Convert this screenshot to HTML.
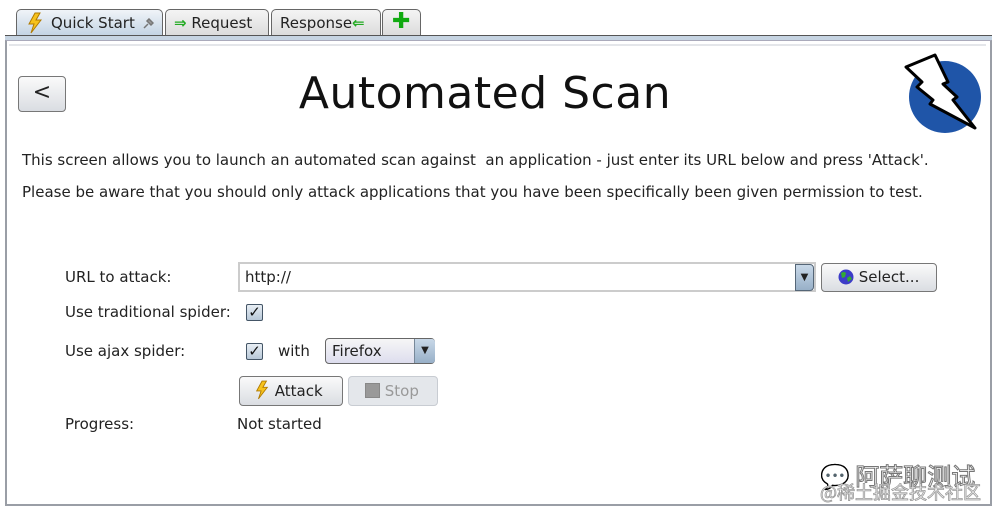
<!DOCTYPE html>
<html><head><meta charset="utf-8"><style>
body{margin:0;width:997px;height:517px;background:#fff;position:relative;overflow:hidden;font-family:"DejaVu Sans","Liberation Sans",sans-serif;font-size:15px;color:#222}
.a{position:absolute}
.tab{position:absolute;top:9px;height:26px;border:1px solid #666;border-bottom:none;border-radius:5px 5px 0 0;background:linear-gradient(#f4f4f4,#dcdcdc);font-size:15px;line-height:26px;box-sizing:border-box;padding-left:8px;white-space:nowrap}
.tab.sel{background:linear-gradient(#f0f4f8,#c4d4e4);}
.btn{position:absolute;border:1px solid #777;border-radius:4px;background:linear-gradient(#fafafa,#dadde2);box-sizing:border-box;font-size:15px}
.cb{position:absolute;width:15px;height:15px;border:1px solid #456;border-radius:2px;background:linear-gradient(#e8eef4,#b8c8d8);font-size:15px;line-height:15px;text-align:center;font-weight:bold;color:#111}
</style></head><body>
<div class="tab sel" style="left:16px;width:147px">
<svg class="a" style="left:9px;top:2px" width="18" height="22" viewBox="0 0 18 22"><path d="M9 1 L3 12 L8 12 L5 21 L15 8 L10 8 L14 1 Z" fill="#f6c21c" stroke="#b07a00" stroke-width="1"/></svg>
<span style="position:absolute;left:34px">Quick Start</span>
<svg class="a" style="left:126px;top:8px" width="11" height="11" viewBox="0 0 11 11"><path d="M1 10 L5 6 M4 3 L8 7 M6 1 L10 5 L8 7 L4 3 Z" stroke="#777" fill="#999" stroke-width="1.5"/></svg></div>
<div class="tab" style="left:165px;width:104px"><span style="color:#2a2;font-weight:bold">⇒</span> Request</div>
<div class="tab" style="left:271px;width:110px">Response<span style="color:#2a2;font-weight:bold">⇐</span></div>
<div class="tab" style="left:382px;width:39px;color:#1a1;font-weight:bold;font-size:22px;padding-left:9px;line-height:24px">✚</div>
<div class="a" style="left:5px;top:35px;width:987px;height:5px;background:#c6d4e2;border-top:1px solid #555"></div>
<div class="a" style="left:5px;top:40px;width:983px;height:463px;border:2px solid #9a9ea6;border-top:1px solid #aab;background:#fff"></div>
<div class="a" style="left:9px;top:44px;width:977px;height:2px;background:#e4e6ea"></div>
<div class="btn" style="left:18px;top:76px;width:48px;height:36px;font-size:22px;text-align:center;line-height:32px">&lt;</div>
<div class="a" style="left:0;width:970px;top:68px;text-align:center;font-size:44px;color:#111;letter-spacing:0.5px">Automated Scan</div>
<svg class="a" style="left:890px;top:40px" width="107" height="100" viewBox="0 0 107 100">
<circle cx="55" cy="57" r="36" fill="#1f55a8"/>
<path d="M16 27 L45 15 L58 42 L53 44 L67 57 L63 60 L85 88 L40 64 L43 60 L27 47 L32 42 Z" fill="#fff" stroke="#000" stroke-width="3" stroke-linejoin="round"/></svg>
<div class="a" style="left:22px;top:151px;white-space:nowrap">This screen allows you to launch an automated scan against&nbsp; an application - just enter its URL below and press 'Attack'.</div>
<div class="a" style="left:22px;top:183px;white-space:nowrap">Please be aware that you should only attack applications that you have been specifically been given permission to test.</div>
<div class="a" style="left:65px;top:268px">URL to attack:</div>
<div class="a" style="left:238px;top:262px;width:578px;height:30px;border:2px solid #ccc;box-sizing:border-box;background:#fff;padding-left:5px;line-height:26px">http://</div>
<div class="a" style="left:795px;top:264px;width:19px;height:27px;border:1px solid #567;border-radius:0 4px 4px 0;background:linear-gradient(#c8d8e8,#98b0c8);box-sizing:border-box;font-size:10px;text-align:center;line-height:25px">▼</div>
<div class="btn" style="left:821px;top:263px;width:116px;height:29px;line-height:27px;padding-left:16px">
<svg style="vertical-align:-3px" width="16" height="16" viewBox="0 0 16 16"><circle cx="8" cy="8" r="7.5" fill="#3c3cc8"/><path d="M3 4 Q6 2 8 4 L7 8 L4 9 Z M9 9 L12 7 L14 10 L10 13 Z" fill="#3a3"/></svg> Select...</div>
<div class="a" style="left:65px;top:303px">Use traditional spider:</div>
<div class="cb" style="left:246px;top:304px">✓</div>
<div class="a" style="left:65px;top:342px">Use ajax spider:</div>
<div class="cb" style="left:246px;top:343px">✓</div>
<div class="a" style="left:278px;top:342px">with</div>
<div class="a" style="left:325px;top:338px;width:110px;height:26px;border:1px solid #666;border-radius:4px;background:linear-gradient(#f6f6f6,#dde);box-sizing:border-box;padding-left:6px;line-height:24px">Firefox</div>
<div class="a" style="left:414px;top:339px;width:20px;height:24px;border-left:1px solid #789;border-radius:0 3px 3px 0;background:linear-gradient(#c8d8e8,#98b0c8);font-size:10px;text-align:center;line-height:24px">▼</div>
<div class="btn" style="left:239px;top:376px;width:104px;height:30px;line-height:28px;padding-left:14px">
<svg style="vertical-align:-4px" width="16" height="20" viewBox="0 0 18 22"><path d="M9 1 L3 12 L8 12 L5 21 L15 8 L10 8 L14 1 Z" fill="#f6c21c" stroke="#b07a00"/></svg> Attack</div>
<div class="a" style="left:348px;top:376px;width:90px;height:30px;border:1px solid #c8ccd2;border-radius:4px;background:#e4e7eb;box-sizing:border-box;line-height:28px;padding-left:16px;color:#999">
<span style="display:inline-block;width:13px;height:13px;background:#999;border:1px solid #888;vertical-align:-2px"></span> Stop</div>
<div class="a" style="left:65px;top:415px">Progress:</div>
<div class="a" style="left:237px;top:415px">Not started</div>
<div class="a" style="left:820px;top:457px;font-size:24px;color:#fff;-webkit-text-stroke:1px #777;font-family:'Noto Sans CJK SC',sans-serif">💬 阿萨聊测试</div>
<div class="a" style="left:820px;top:479px;font-size:18px;color:#fff;-webkit-text-stroke:0.8px #999;font-family:'Noto Sans CJK SC',sans-serif">@稀土掘金技术社区</div>
</body></html>
